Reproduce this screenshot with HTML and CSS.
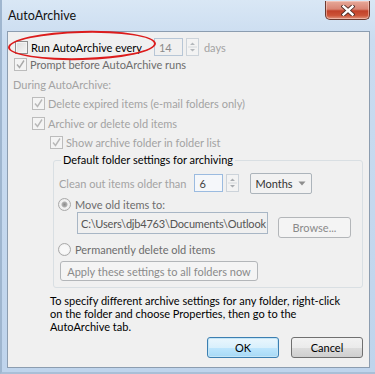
FILE: index.html
```html
<!DOCTYPE html>
<html lang="en">
<head>
<meta charset="UTF-8">
<meta name="viewport" content="width=device-width, initial-scale=1.0">
<title>AutoArchive</title>
<link rel="stylesheet" href="styles.css">
</head>
<body>
<div class="window">
  <div class="titlebar">
    <span class="title">AutoArchive</span>
    <div class="close">
      <svg width="14" height="11" viewBox="0 0 14 11">
        <path d="M2.5 1.5 L11.5 9.5 M11.5 1.5 L2.5 9.5" stroke="#4a2a24" stroke-width="4.2" stroke-linecap="square" fill="none"/>
        <path d="M2.5 1.5 L11.5 9.5 M11.5 1.5 L2.5 9.5" stroke="#fff" stroke-width="2.4" stroke-linecap="square" fill="none"/>
      </svg>
    </div>
  </div>

  <div class="client">
    <div class="row row-run">
      <span class="cb"></span>
      <span class="lbl">Run AutoArchive every</span>
      <span class="field num">14</span>
      <span class="spin">
        <svg width="11" height="16" viewBox="0 0 11 16"><path d="M3 6 L5.5 3.5 L8 6 Z M3 10 L5.5 12.5 L8 10 Z" fill="#b4b8bc"/><path d="M1 8 H10" stroke="#d6dadd"/></svg>
      </span>
      <span class="lbl dim days">days</span>
    </div>

    <div class="row row-prompt">
      <span class="cb on"><svg width="11" height="11" viewBox="0 0 11 11"><path d="M2 5.5 L4.5 8.5 L9 1.5" stroke="#a9a9a9" stroke-width="1.4" fill="none"/></svg></span>
      <span class="lbl gray">Prompt before AutoArchive runs</span>
    </div>

    <div class="row row-during">
      <span class="lbl dim">During AutoArchive:</span>
    </div>

    <div class="row ind1">
      <span class="cb on"><svg width="11" height="11" viewBox="0 0 11 11"><path d="M2 5.5 L4.5 8.5 L9 1.5" stroke="#b8b8b8" stroke-width="1.4" fill="none"/></svg></span>
      <span class="lbl dim">Delete expired items (e-mail folders only)</span>
    </div>

    <div class="row ind1">
      <span class="cb on"><svg width="11" height="11" viewBox="0 0 11 11"><path d="M2 5.5 L4.5 8.5 L9 1.5" stroke="#b8b8b8" stroke-width="1.4" fill="none"/></svg></span>
      <span class="lbl dim">Archive or delete old items</span>
    </div>

    <div class="row ind2">
      <span class="cb on"><svg width="11" height="11" viewBox="0 0 11 11"><path d="M2 5.5 L4.5 8.5 L9 1.5" stroke="#b8b8b8" stroke-width="1.4" fill="none"/></svg></span>
      <span class="lbl dim">Show archive folder in folder list</span>
    </div>

    <fieldset class="group">
      <legend>Default folder settings for archiving</legend>

      <div class="row row-clean">
        <span class="lbl dim">Clean out items older than</span>
        <span class="field num six">6</span>
        <span class="spin">
          <svg width="11" height="16" viewBox="0 0 11 16"><path d="M3 6 L5.5 3.5 L8 6 Z M3 10 L5.5 12.5 L8 10 Z" fill="#a9adb1"/><path d="M1 8 H10" stroke="#d6dadd"/></svg>
        </span>
        <span class="select">Months<svg width="8" height="5" viewBox="0 0 8 5"><path d="M0.5 0.5 L7.5 0.5 L4 4.5 Z" fill="#8d8d8d"/></svg></span>
      </div>

      <div class="row row-radio">
        <span class="radio on"></span>
        <span class="lbl gray">Move old items to:</span>
      </div>

      <div class="row row-path">
        <span class="field path">C:\Users\djb4763\Documents\Outlook</span>
        <span class="btn browse">Browse...</span>
      </div>

      <div class="row row-radio row-perm">
        <span class="radio"></span>
        <span class="lbl gray">Permanently delete old items</span>
      </div>

      <div class="row row-apply">
        <span class="btn apply">Apply these settings to all folders now</span>
      </div>
    </fieldset>

    <p class="note">To specify different archive settings for any folder, right-click on the folder and choose Properties, then go to the AutoArchive tab.</p>

    <div class="actions">
      <span class="btn push ok">OK</span>
      <span class="btn push">Cancel</span>
    </div>
  </div>

  <div class="ring"></div>
</div>
</body>
</html>
```

FILE: styles.css
```css
body {
  margin: 0;
  padding: 0;
  font-family: Lato, "Noto Sans", sans-serif;
  font-size: 11px;
  color: #000;
  background: #c6daef;
}
.window {
  position: relative;
  width: 375px;
  height: 374px;
  overflow: hidden;
  background: linear-gradient(to bottom, #d9e7f5 0, #cadcf0 40px, #bfd4ec 100%);
  box-sizing: border-box;
  border-left: 2px solid #9fb6cf;
  border-bottom: 2px solid #a9bfd7;
}
.titlebar {
  height: 31px;
  display: flex;
  justify-content: space-between;
  align-items: flex-start;
}
.title {
  margin: 8px 0 0 6px;
  font-size: 12.5px;
  color: #111;
}
.close {
  width: 45px;
  height: 19px;
  margin: 1px 5px 0 0;
  border: 1px solid #6b3a30;
  border-top: none;
  border-radius: 0 0 5px 5px;
  background: linear-gradient(to bottom, #e6a99a 0, #d98574 45%, #c24129 55%, #cc5337 80%, #e0957f 100%);
  display: flex;
  align-items: center;
  justify-content: center;
  box-sizing: border-box;
  box-shadow: inset 0 0 0 1px rgba(255, 220, 210, 0.5);
}
.client {
  margin: 0 5px 0 5px;
  height: 337px;
  box-sizing: border-box;
  background: #f0f0f0;
  border: 1px solid #8c9db0;
  padding: 6px 6px 0 7px;
}
.row {
  display: flex;
  align-items: center;
  height: 16px;
}
.lbl { white-space: nowrap; }
.dim { color: #a3a3a3; }
.gray { color: #6d6d6d; }
.cb {
  width: 13px;
  height: 13px;
  box-sizing: border-box;
  border: 1px solid #8f8f8f;
  background: linear-gradient(135deg, #dcdcdc, #f7f7f7);
  box-shadow: inset 0 0 0 1px #f4f4f4;
  margin-right: 3px;
  display: flex;
  align-items: center;
  justify-content: center;
  flex: none;
}
.cb.on {
  border-color: #bcbcbc;
  background: #f4f4f4;
  box-shadow: none;
}
.row-run { height: 18px; }
.row-prompt { margin-top: 0; }
.row-prompt .cb { margin-left: -1px; }
.row-during { margin: 4px 0 0 -2px; }
.ind1 { margin: 3px 0 0 17px; }
.ind1 + .ind1 { margin-top: 4px; }
.ind2 { margin: 3px 0 0 35px; }
.field {
  box-sizing: border-box;
  height: 18px;
  border: 1px solid #b7c6d6;
  background: #f0f0f0;
  display: flex;
  align-items: center;
  padding-left: 4px;
  flex: none;
}
.num {
  width: 29px;
  margin-left: 12px;
  color: #8a8a8a;
}
.spin {
  width: 13px;
  height: 18px;
  box-sizing: border-box;
  border: 1px solid #ccd3da;
  background: #f3f3f3;
  margin-left: 3px;
  display: flex;
  align-items: center;
  justify-content: center;
  flex: none;
}
.days { margin-left: 5px; }
.group {
  margin: 2px 0 0 38px;
  padding: 0 6px 6px 5px;
  border: 1px solid #d9dfe3;
  border-radius: 3px;
}
.group legend {
  padding: 0 2px;
  margin-left: 2px;
  color: #000;
  line-height: 16px;
}
.row-clean {
  height: 20px;
  margin-top: 5px;
}
.six {
  margin-left: 8px;
  border-color: #9bbbe0;
  color: #444;
  background: #f5f7fa;
}
.select {
  margin-left: 11px;
  width: 62px;
  height: 21px;
  box-sizing: border-box;
  border: 1px solid #acb4bb;
  border-radius: 2px;
  background: #f2f2f2;
  display: flex;
  align-items: center;
  justify-content: space-between;
  padding: 0 5px 0 4px;
  color: #333;
}
.radio {
  width: 13px;
  height: 13px;
  box-sizing: border-box;
  border-radius: 50%;
  border: 1px solid #a9a9a9;
  background: radial-gradient(circle, #f8f8f8 50%, #e2e2e2 100%);
  margin: 0 4px 0 -1px;
  flex: none;
}
.radio.on {
  background: radial-gradient(circle, #8a8a8a 0, #b0b0b0 2.5px, #f2f2f2 3.5px, #e6e6e6 100%);
}
.row-radio { margin-top: 3px; }
.row-path {
  height: 26px;
  margin-top: 0;
  align-items: flex-start;
}
.path {
  width: 191px;
  height: 22px;
  margin-left: 18px;
  color: #555;
  border-color: #a8b6c5;
  padding-left: 3px;
  letter-spacing: -0.2px;
  white-space: nowrap;
}
.btn {
  box-sizing: border-box;
  display: flex;
  align-items: center;
  justify-content: center;
  border: 1px solid #b3b6b9;
  border-radius: 3px;
  background: #f4f4f4;
  color: #8a8a8a;
  white-space: nowrap;
}
.browse {
  width: 73px;
  height: 21px;
  margin: 5px 0 0 10px;
}
.row-perm { margin-top: 3px; }
.row-apply {
  height: 20px;
  margin-top: 4px;
}
.apply {
  width: 198px;
  height: 20px;
  margin-left: 1px;
}
.note {
  margin: 6px 0 0 35px;
  line-height: 13px;
  width: 305px;
}
.actions {
  display: flex;
  justify-content: flex-end;
  gap: 12px;
  margin-top: 4px;
}
.push {
  width: 72px;
  height: 21px;
  color: #000;
  border-color: #707070;
  background: linear-gradient(to bottom, #f2f2f2 0, #ebebeb 50%, #dddddd 51%, #cfcfcf 100%);
}
.ok {
  border-color: #3c7fb1;
  box-shadow: inset 0 0 0 1px #c4e5f6;
  background: linear-gradient(to bottom, #eaf6fd 0, #d9f0fc 50%, #bee6fd 51%, #a7d9f5 100%);
}
.ring {
  position: absolute;
  left: 6px;
  top: 31px;
  width: 148px;
  height: 29px;
  box-sizing: border-box;
  border: 2px solid #dc1c1c;
  border-radius: 50%;
  transform: rotate(-1.5deg);
}
```
